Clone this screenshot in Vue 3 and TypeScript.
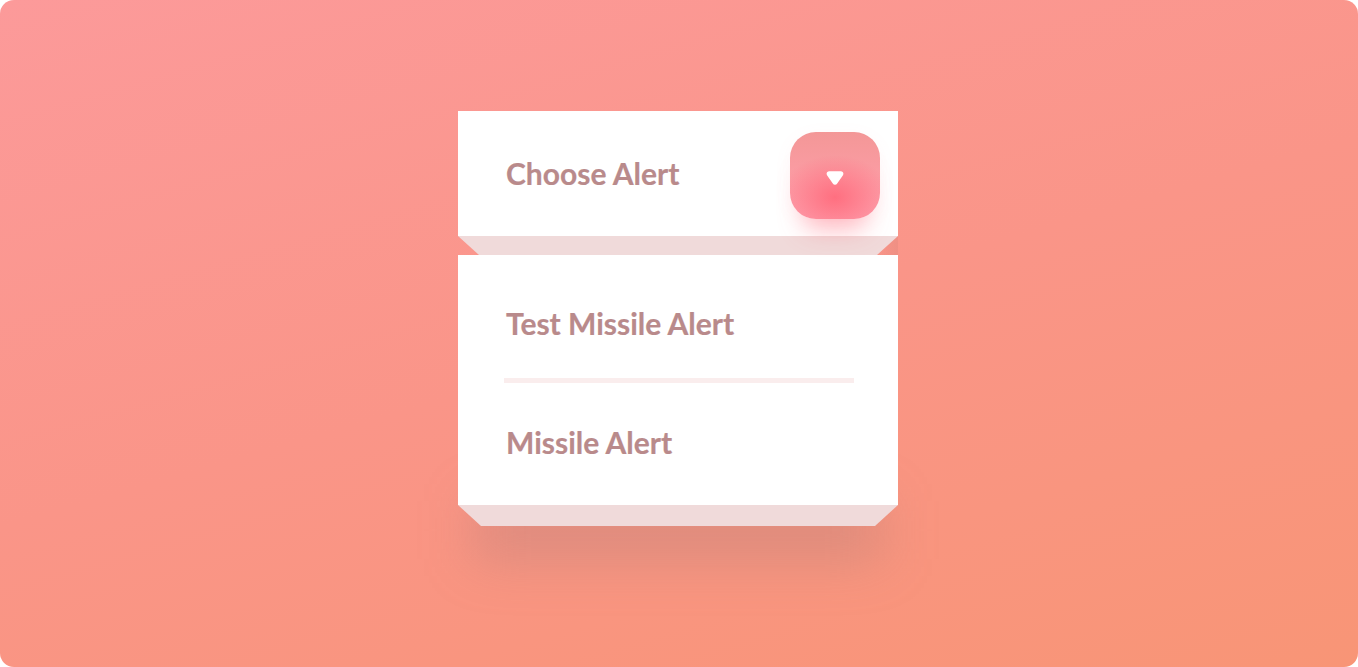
<script setup lang="ts">
const options: string[] = ['Test Missile Alert', 'Missile Alert']
</script>

<template>
  <main class="page">
    <section class="dropdown">
      <header class="head">
        <span class="label">Choose Alert</span>
        <button class="toggle" type="button" aria-label="Toggle">
          <svg class="caret" width="18" height="14" viewBox="0 0 18 14">
            <path d="M3.2 .3h11.600c2.200 0 3.400 2.500 2 4.200l-5.600 8a2.600 2.600 0 0 1-4.400 0l-5.600-8c-1.400-1.700-.2-4.200 2-4.200z" fill="#fff" />
          </svg>
        </button>
      </header>
      <div class="gap">
        <div class="bevel bevel-top"></div>
      </div>
      <ul class="list">
        <li v-for="(o, i) in options" :key="o" class="item" :class="{ first: i === 0 }">
          <span class="label">{{ o }}</span>
        </li>
      </ul>
      <div class="bevel bevel-bottom"></div>
      <div class="shadow"></div>
    </section>
  </main>
</template>

<style>
html, body { margin: 0; background: #fff; }
</style>

<style scoped>
.page {
  box-sizing: border-box;
  width: 1358px;
  height: 667px;
  border-radius: 14px;
  padding: 111px 2px 0 0;
  display: flex;
  flex-direction: column;
  align-items: center;
  background: linear-gradient(164deg, #fc9a9a 0%, #fa9588 50%, #f89576 100%);
  overflow: hidden;
}
.dropdown {
  position: relative;
  width: 440px;
  font-family: Lato, sans-serif;
}
.head {
  position: relative;
  z-index: 2;
  box-sizing: border-box;
  height: 125px;
  background: #fff;
  display: flex;
  align-items: center;
  justify-content: space-between;
  padding: 0 18px 0 48px;
}
.label {
  font-size: 30px;
  font-weight: 700;
  color: #b98a8b;
  -webkit-text-stroke: 0.2px #b98a8b;
}
.head .label {
  position: relative;
  top: -1px;
}
.toggle {
  position: relative;
  z-index: 3;
  top: 2px;
  width: 90px;
  height: 87px;
  padding: 0;
  border: 0;
  border-radius: 26px;
  display: flex;
  align-items: center;
  justify-content: center;
  background:
    radial-gradient(ellipse 56px 42px at 50% 75%, #ff6f80 0%, rgba(255, 111, 128, 0) 100%),
    linear-gradient(180deg, #f39797 0%, #fb9ca3 50%, #fe9fad 100%);
  box-shadow: 0 24px 26px -14px rgba(255, 90, 110, 0.42), 0 4px 18px rgba(255, 120, 130, 0.06);
}
.caret {
  margin-top: 4px;
}
.gap {
  position: relative;
  z-index: 1;
  height: 19px;
  background: linear-gradient(90deg, transparent 95%, rgba(170, 110, 100, 0.14) 100%);
}
.bevel {
  background: #f0dada;
}
.bevel-top {
  height: 19px;
  clip-path: polygon(0 0, 100% 0, calc(100% - 21px) 100%, 21px 100%);
}
.bevel-bottom {
  position: relative;
  z-index: 1;
  height: 21px;
  clip-path: polygon(0 0, 100% 0, calc(100% - 23px) 100%, 23px 100%);
}
.list {
  position: relative;
  z-index: 1;
  box-sizing: border-box;
  height: 250px;
  margin: 0;
  padding: 0 44px 0 46px;
  list-style: none;
  background: #fff;
}
.item {
  box-sizing: border-box;
  display: flex;
  align-items: center;
  padding-left: 2px;
  height: 118px;
}
.item.first {
  height: 128px;
  padding-top: 12px;
  border-bottom: 5px solid #faeded;
}
.shadow {
  position: absolute;
  z-index: 0;
  left: 16px;
  right: 16px;
  top: 390px;
  height: 58px;
  background: rgba(150, 115, 115, 0.3);
  filter: blur(26px);
}
</style>
